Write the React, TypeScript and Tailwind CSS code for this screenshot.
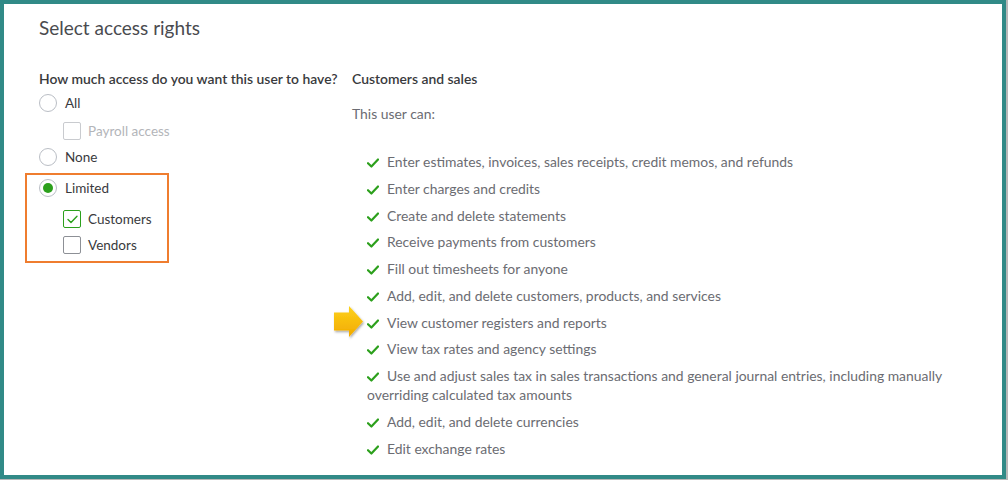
import React from 'react'

// Access rights panel — two columns: access level choice on the left, permission list on the right.

const PERMISSIONS = [
  'Enter estimates, invoices, sales receipts, credit memos, and refunds',
  'Enter charges and credits',
  'Create and delete statements',
  'Receive payments from customers',
  'Fill out timesheets for anyone',
  'Add, edit, and delete customers, products, and services',
  'View customer registers and reports',
  'View tax rates and agency settings',
  'Use and adjust sales tax in sales transactions and general journal entries, including manually overriding calculated tax amounts',
  'Add, edit, and delete currencies',
  'Edit exchange rates',
]

function Radio({ checked, label }: { checked?: boolean; label: string }) {
  return (
    <div className="flex h-[26px] items-center gap-2">
      <span className="flex h-[18px] w-[18px] items-center justify-center rounded-full border border-[#babec5] bg-white">
        {checked && <span className="h-[10px] w-[10px] rounded-full bg-[#2ca01c]" />}
      </span>
      <span className="text-[13.5px] text-[#393a3d]">{label}</span>
    </div>
  )
}

function Checkbox({ checked, disabled, label }: { checked?: boolean; disabled?: boolean; label: string }) {
  return (
    <div className="flex h-[26px] items-center gap-[7px] pl-6">
      <span
        className={`flex h-[18px] w-[18px] items-center justify-center rounded-[2px] border bg-white ${
          checked ? 'border-[#2ca01c]' : disabled ? 'border-[#c9cbcf]' : 'border-[#8d9096]'
        }`}
      >
        {checked && (
          <svg width="11" height="9" viewBox="0 0 11 9" fill="none">
            <path d="M1 4.5l3 3L10 1.2" stroke="#2ca01c" strokeWidth="1.4" strokeLinecap="round" strokeLinejoin="round" />
          </svg>
        )}
      </span>
      <span className={`text-[13.5px] ${disabled ? 'text-[#b3b5b9]' : 'text-[#393a3d]'}`}>{label}</span>
    </div>
  )
}

function Tick() {
  return (
    <svg width="12" height="10" viewBox="0 0 12 10" className="mr-2 inline-block align-[-1px]">
      <path d="M1 5.2l3.4 3.3L11 1.5" fill="none" stroke="#2ca01c" strokeWidth="2.2" strokeLinecap="round" strokeLinejoin="round" />
    </svg>
  )
}

function PointerArrow() {
  return (
    <svg width="34" height="38" viewBox="0 0 34 38" className="absolute -left-[35px] -top-[9px]">
      <defs>
        <linearGradient id="arrowFill" x1="0" y1="0" x2="0" y2="1">
          <stop offset="0" stopColor="#fdd21a" />
          <stop offset="1" stopColor="#f2a900" />
        </linearGradient>
        <filter id="arrowShadow" x="-30%" y="-30%" width="160%" height="160%">
          <feDropShadow dx="1" dy="1.5" stdDeviation="1.2" floodColor="#000" floodOpacity="0.35" />
        </filter>
      </defs>
      <path d="M2 8.5h15V2l14 15.5L17 33v-6.5H2z" fill="url(#arrowFill)" filter="url(#arrowShadow)" />
    </svg>
  )
}

export default function App() {
  return (
    <div className="h-[480px] w-[1008px] bg-[#b8b8b8]" style={{ fontFamily: 'Lato, "Open Sans", sans-serif' }}>
      <div className="h-[479px] w-[1006px] border-4 border-[#318a87] bg-white pl-[35px] pt-[12px]">
        <h1 className="h-[24px] text-[19px] leading-[24px] text-[#4a4b4f]">Select access rights</h1>

        <div className="mt-[29px] flex">
          {/* access level */}
          <div className="w-[313px]">
            <div className="h-[20px] text-[13.9px] font-semibold leading-[20px] text-[#393a3d]">
              How much access do you want this user to have?
            </div>
            <div className="mt-px">
              <Radio label="All" />
              <div className="h-[2px]" />
              <Checkbox disabled label="Payroll access" />
              <Radio label="None" />
            </div>
            <div className="-ml-[14px] mt-[3px] w-[144px] border-2 border-[#ef7d2f] pb-[3px] pl-3">
              <Radio checked label="Limited" />
              <div className="mt-[5px]">
                <Checkbox checked label="Customers" />
                <Checkbox label="Vendors" />
              </div>
            </div>
          </div>

          {/* permissions */}
          <div className="flex-1">
            <div className="h-[20px] text-[13.9px] font-semibold leading-[20px] text-[#393a3d]">Customers and sales</div>
            <div className="mt-[15px] text-[13.9px] leading-[20px] text-[#6b6c72]">This user can:</div>
            <ul className="mt-[28px] w-[592px] space-y-[7.75px] pl-[15px] text-[13.9px] leading-[19px] text-[#6b6c72]">
              {PERMISSIONS.map((p, i) => (
                <li key={p} className="relative">
                  {i === 6 && <PointerArrow />}
                  <Tick />
                  {p}
                </li>
              ))}
            </ul>
          </div>
        </div>
      </div>
    </div>
  )
}
